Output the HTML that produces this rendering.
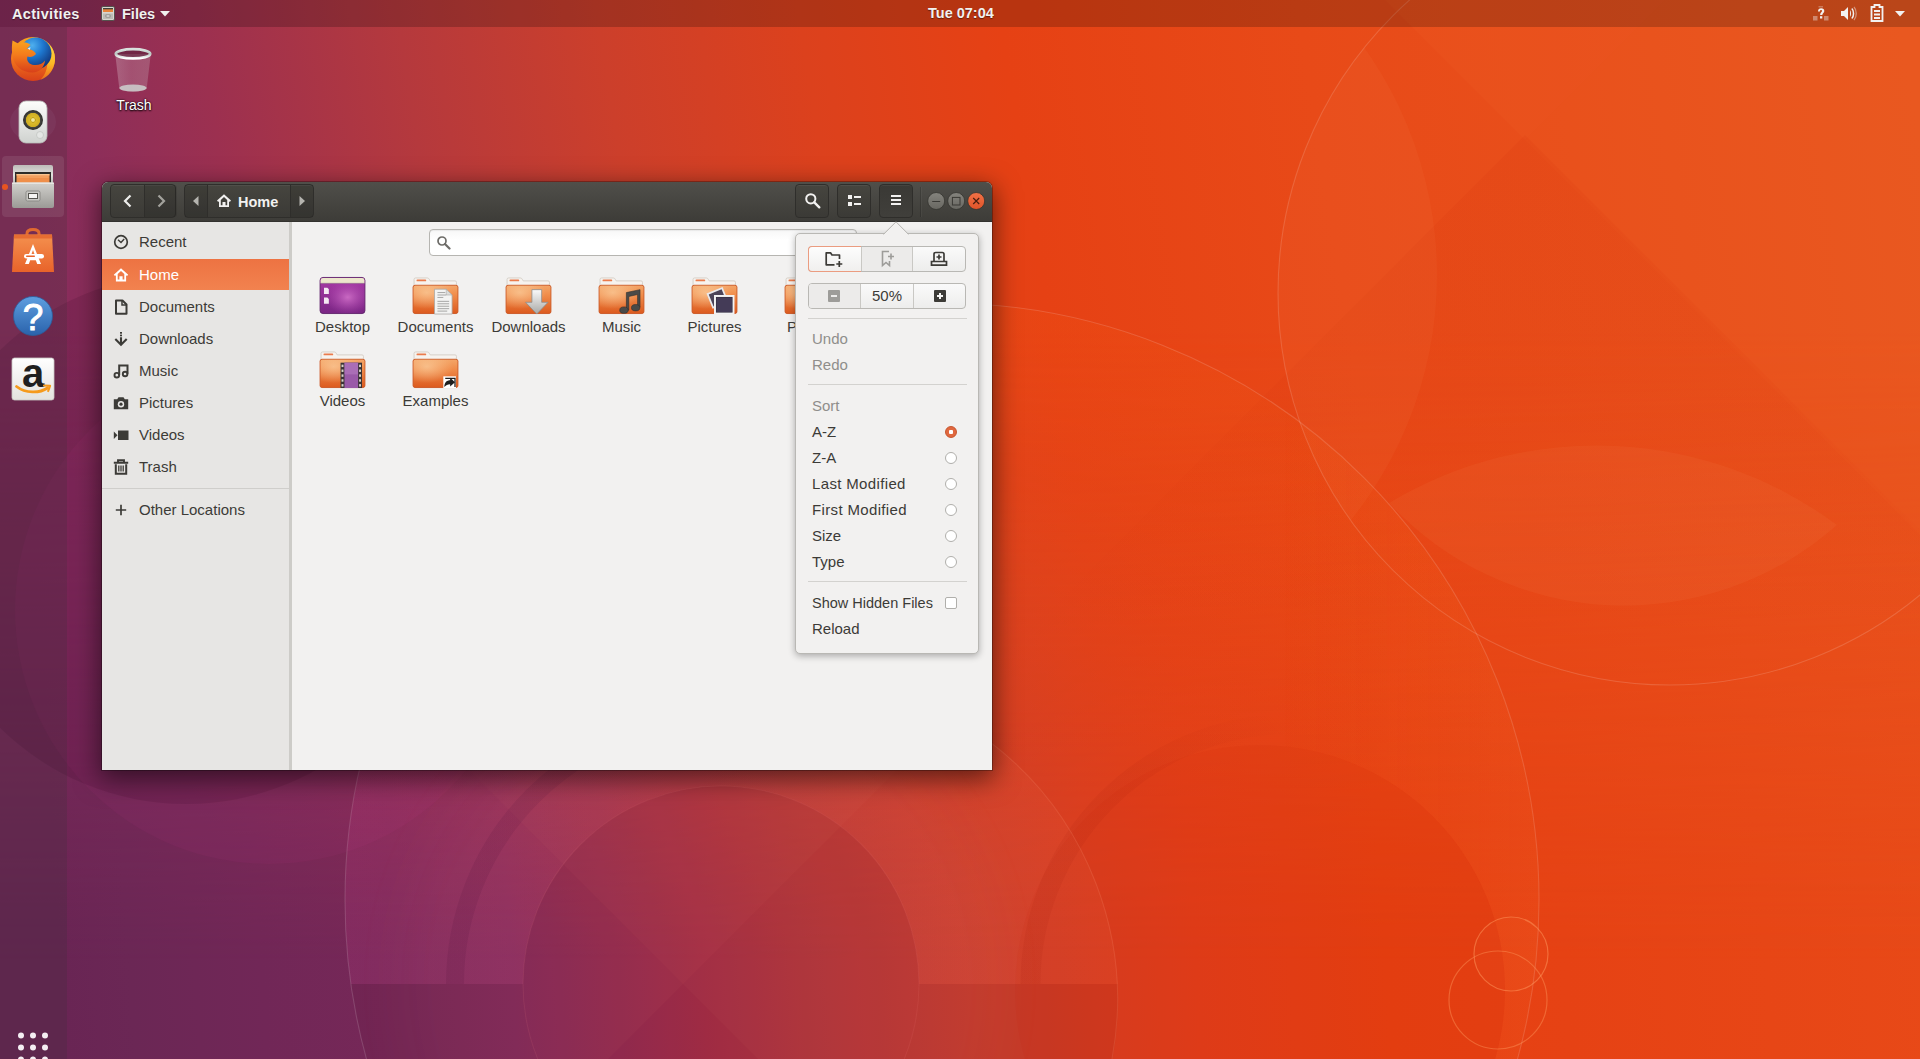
<!DOCTYPE html>
<html lang="en">
<head>
<meta charset="utf-8">
<title>Files - Home</title>
<style>
*{box-sizing:border-box;margin:0;padding:0}
html,body{width:1920px;height:1059px;overflow:hidden;background:#7a2858}
body{position:relative;font-family:"Liberation Sans","DejaVu Sans",sans-serif;font-size:14px;color:#3c3b37}
#wall{position:absolute;left:0;top:0;width:1920px;height:1059px}
/* top bar */
#topbar{position:absolute;left:0;top:0;width:1920px;height:27px;background:rgba(0,0,0,.2);color:#f2f1f0;font-weight:bold;font-size:14.5px}
#topbar .t{position:absolute;top:1px;line-height:27px;letter-spacing:.2px;white-space:nowrap;text-shadow:0 1px 1px rgba(0,0,0,.45)}
/* dock */
#dock{position:absolute;left:0;top:27px;width:67px;height:1032px;background:rgba(52,52,52,.2)}
#dock .hl{position:absolute;left:2px;top:129px;width:62px;height:61px;border-radius:4px;background:rgba(255,255,255,.085)}
#dock .run{position:absolute;left:2px;top:157px;width:6px;height:6px;border-radius:50%;background:#e95420}
#dock svg.ic{position:absolute;left:9px;width:48px;height:48px}
/* desktop icon */
#trash{position:absolute;left:94px;top:44px;width:80px;text-align:center;color:#fff;font-size:14px;text-shadow:0 1px 2px #000,0 0 2px #000}
/* window */
#win{position:absolute;left:102px;top:182px;width:890px;height:588px;border-radius:6px 6px 0 0;box-shadow:0 7px 26px 2px rgba(0,0,0,.55),0 0 0 1px rgba(0,0,0,.28);background:#f2f1f0}
#hdr{position:absolute;left:0;top:0;width:890px;height:40px;border-radius:6px 6px 0 0;background:linear-gradient(#504f4a,#3d3c38);border-bottom:1px solid #33322f}
.hb{position:absolute;top:2px;height:34px;border:1px solid #2f2e2b;border-radius:4px;background:linear-gradient(#46453f,#3b3a36);box-shadow:inset 0 1px 0 rgba(255,255,255,.06)}
#side{position:absolute;left:0;top:40px;width:190px;height:548px;background:#e7e6e4;border-right:3px solid #cdccc8}
#side .row{position:absolute;left:0;width:187px;height:32px;line-height:32px;padding-left:37px;font-size:15px;color:#3c3b37;white-space:nowrap}
#side .row.sel{background:linear-gradient(#ed7342,#f2824f);color:#fff}
#side .row svg{position:absolute;left:11px;top:8px;width:16px;height:16px}
#side .sep{position:absolute;left:0;top:266px;width:187px;height:1px;background:#cfcecb}
#main{position:absolute;left:190px;top:40px;width:700px;height:548px;background:#f2f1f0;overflow:hidden}
#search{position:absolute;left:137px;top:7px;width:428px;height:27px;border:1px solid #b6b5b1;border-radius:4px;background:linear-gradient(#f7f7f7,#fff 40%);box-shadow:inset 0 1px 1px rgba(0,0,0,.06)}
.fi{position:absolute;width:93px;text-align:center;font-size:15px;line-height:17px;color:#3c3b37;white-space:nowrap}
.fi svg{display:block;margin:0 auto 3px;width:47px;height:39px}
/* popover */
#pop{position:absolute;left:795px;top:233px;width:184px;height:421px;background:#f2f1f0;border:1px solid #b9b8b4;border-radius:5px;box-shadow:0 2px 7px rgba(0,0,0,.3);font-size:15px}
#pop .it{position:absolute;left:16px;height:26px;line-height:26px;white-space:nowrap;color:#3c3b37}
#pop .it.dis{color:#8f8e8b}
#pop .sp{position:absolute;left:12px;width:159px;height:1px;background:#d3d2cf}
#pop .rd{position:absolute;left:149px;width:12px;height:12px;border-radius:50%;border:1px solid #b0afab;background:#fff}
#pop .rd.on{border-color:#c8542c;background:radial-gradient(circle,#fff 0 2px,#e0683f 2.5px)}
#pop .cb{position:absolute;left:149px;width:12px;height:12px;border-radius:2px;border:1px solid #b0afab;background:#fff}
.bg{position:absolute;left:12px;width:158px;height:26px;border:1px solid #b9b8b4;border-radius:4px;background:linear-gradient(#fafafa,#ededec)}
.bg .c{position:absolute;top:0;height:24px;width:52px}
</style>
</head>
<body>
<!--WALL-->
<svg id="wall" viewBox="0 0 1920 1059" width="1920" height="1059">
<defs>
<linearGradient id="gt" gradientUnits="userSpaceOnUse" x1="0" y1="30" x2="1874" y2="-270">
<stop offset="0" stop-color="#872c5c"/>
<stop offset="0.036" stop-color="#8c2e5a"/>
<stop offset="0.104" stop-color="#9c3050"/>
<stop offset="0.208" stop-color="#b5393d"/>
<stop offset="0.312" stop-color="#cc3f2b"/>
<stop offset="0.417" stop-color="#dc411d"/>
<stop offset="0.521" stop-color="#e64114"/>
<stop offset="0.677" stop-color="#e84a18"/>
<stop offset="0.99" stop-color="#e9561f"/>
</linearGradient>
<linearGradient id="gb" gradientUnits="userSpaceOnUse" x1="0" y1="0" x2="1920" y2="-120">
<stop offset="0.000" stop-color="#692554"/>
<stop offset="0.036" stop-color="#6b2755"/>
<stop offset="0.104" stop-color="#712757"/>
<stop offset="0.177" stop-color="#772858"/>
<stop offset="0.234" stop-color="#822a5c"/>
<stop offset="0.284" stop-color="#922c52"/>
<stop offset="0.333" stop-color="#a42e46"/>
<stop offset="0.385" stop-color="#b2363c"/>
<stop offset="0.438" stop-color="#c03a34"/>
<stop offset="0.484" stop-color="#cc3e2c"/>
<stop offset="0.536" stop-color="#d83e22"/>
<stop offset="0.589" stop-color="#e03e1a"/>
<stop offset="0.688" stop-color="#e64012"/>
<stop offset="0.781" stop-color="#e64214"/>
<stop offset="0.990" stop-color="#e84a18"/>
</linearGradient>
<linearGradient id="gm" gradientUnits="userSpaceOnUse" x1="0" y1="330" x2="0" y2="960">
<stop offset="0" stop-color="#fff"/><stop offset=".5" stop-color="#808080"/><stop offset="1" stop-color="#000"/>
</linearGradient>
<mask id="mt" maskUnits="userSpaceOnUse" x="0" y="0" width="1920" height="1059"><rect width="1920" height="1059" fill="url(#gm)"/></mask>
<clipPath id="cC1"><circle cx="1670" cy="293" r="392"/></clipPath>
<clipPath id="cBig"><circle cx="942" cy="900" r="597"/></clipPath>
<clipPath id="cDisc"><circle cx="721" cy="984" r="198"/></clipPath>
<clipPath id="cTop"><rect x="0" y="0" width="1920" height="984"/></clipPath>
<linearGradient id="gr1" gradientUnits="userSpaceOnUse" x1="455" y1="984" x2="721" y2="718"><stop offset="0" stop-color="#50103a" stop-opacity=".15"/><stop offset=".6" stop-color="#50103a" stop-opacity=".12"/><stop offset="1" stop-color="#50103a" stop-opacity="0"/></linearGradient>
<linearGradient id="gr2" gradientUnits="userSpaceOnUse" x1="1030" y1="984" x2="1290" y2="724"><stop offset="0" stop-color="#a01808" stop-opacity=".11"/><stop offset=".6" stop-color="#a01808" stop-opacity=".09"/><stop offset="1" stop-color="#a01808" stop-opacity="0"/></linearGradient>
<linearGradient id="glz" gradientUnits="userSpaceOnUse" x1="345" y1="0" x2="1118" y2="0"><stop offset="0" stop-color="#ff50b0" stop-opacity=".1"/><stop offset=".45" stop-color="#ff7080" stop-opacity=".05"/><stop offset="1" stop-color="#ffb090" stop-opacity=".045"/></linearGradient>
<clipPath id="cND"><path clip-rule="evenodd" d="M0 0H1920V1059H0zM919 984A198 198 0 1 0 523 984A198 198 0 1 0 919 984z"/></clipPath>
<linearGradient id="gmz" gradientUnits="userSpaceOnUse" x1="0" y1="690" x2="0" y2="800"><stop offset="0" stop-color="#000"/><stop offset="1" stop-color="#fff"/></linearGradient>
<mask id="mz" maskUnits="userSpaceOnUse" x="0" y="0" width="1920" height="1059"><rect width="1920" height="1059" fill="url(#gmz)"/></mask>
<radialGradient id="gmx" gradientUnits="userSpaceOnUse" cx="700" cy="984" r="340"><stop offset="0" stop-color="#fff"/><stop offset=".78" stop-color="#fff"/><stop offset="1" stop-color="#000"/></radialGradient>
<mask id="mx" maskUnits="userSpaceOnUse" x="0" y="0" width="1920" height="1059"><rect width="1920" height="1059" fill="url(#gmx)"/></mask>
<linearGradient id="gbc" gradientUnits="userSpaceOnUse" x1="0" y1="303" x2="0" y2="800"><stop offset="0" stop-color="#ff6810" stop-opacity=".11"/><stop offset=".4" stop-color="#ff6810" stop-opacity=".09"/><stop offset="1" stop-color="#ff6810" stop-opacity="0"/></linearGradient>
<clipPath id="cZone"><rect x="340" y="0" width="454" height="1059"/><circle cx="794" cy="1000" r="324"/></clipPath>
<mask id="mcr" maskUnits="userSpaceOnUse" x="0" y="0" width="1920" height="1059"><rect width="1920" height="1059" fill="#000"/><circle cx="1275" cy="990" r="236" fill="#fff"/><circle cx="1260" cy="990" r="245" fill="#000"/><rect x="0" y="984" width="1920" height="80" fill="#000"/></mask>
<linearGradient id="gq" gradientUnits="userSpaceOnUse" x1="0" y1="135" x2="0" y2="640"><stop offset="0" stop-color="#c82000" stop-opacity=".09"/><stop offset=".5" stop-color="#c82000" stop-opacity=".06"/><stop offset="1" stop-color="#c82000" stop-opacity="0"/></linearGradient>
<mask id="mcr2" maskUnits="userSpaceOnUse" x="0" y="0" width="1920" height="1059"><rect width="1920" height="1059" fill="#000"/><circle cx="942" cy="900" r="597" fill="#fff"/><circle cx="1260" cy="990" r="245" fill="#000"/></mask>
<linearGradient id="gcr2" gradientUnits="userSpaceOnUse" x1="1280" y1="0" x2="1540" y2="0"><stop offset="0" stop-color="#ff7a30" stop-opacity="0"/><stop offset="1" stop-color="#ff7a30" stop-opacity=".1"/></linearGradient>
</defs>
<rect width="1920" height="1059" fill="url(#gb)"/>
<rect width="1920" height="1059" fill="url(#gt)" mask="url(#mt)"/>
<!-- upper-right X quadrants -->
<path d="M1525 135L1920 530V640H1020z" fill="url(#gq)"/>
<path d="M1525 140L1385 0H1665z" fill="#ff9050" fill-opacity=".05"/>
<path d="M1525 140L1665 0H1920V535z" fill="#ff9050" fill-opacity=".045"/>

<circle cx="942" cy="900" r="597" fill="url(#gbc)"/>
<!-- big thin circle -->
<circle cx="942" cy="900" r="597" fill="none" stroke="#fff" stroke-opacity=".15" stroke-width="1.1"/>
<!-- lens upper right -->
<g clip-path="url(#cC1)"><circle cx="1045" cy="275" r="392" fill="#ffa060" fill-opacity=".07"/></g>
<circle cx="1670" cy="293" r="392" fill="none" stroke="#fff" stroke-opacity=".15" stroke-width="1.1"/>
<!-- leaf -->
<path d="M1389 503A403 403 0 0 1 1837 525A321 321 0 0 1 1389 503z" fill="#ffb070" fill-opacity=".07"/>
<!-- left-bottom lighter circle -->
<circle cx="186" cy="539" r="265" fill="#30001c" fill-opacity=".13"/>
<circle cx="269" cy="610" r="254" fill="#ff50b0" fill-opacity=".045"/>
<!-- horizon zones -->
<g clip-path="url(#cBig)"><g clip-path="url(#cND)"><g clip-path="url(#cZone)"><rect x="340" y="0" width="780" height="984" fill="url(#glz)"/><rect x="340" y="984" width="780" height="80" fill="#300010" fill-opacity=".06"/></g></g></g>
<rect x="1030" y="700" width="300" height="284" fill="#ffb090" fill-opacity=".05" mask="url(#mcr)"/>
<!-- dark disc bottom right -->
<circle cx="1260" cy="990" r="245" fill="#c02000" fill-opacity=".07"/>
<path d="M1030.500 984A260 260 0 0 1 1290 724" fill="none" stroke="url(#gr2)" stroke-width="20"/>
<!-- disc + ring bottom center -->
<circle cx="721" cy="984" r="198" fill="#7a1030" fill-opacity=".10"/>
<g clip-path="url(#cBig)" mask="url(#mx)"><path d="M383 684H1118V1059H758z" fill="#ff9080" fill-opacity=".04"/><path d="M983 684H345V1059H608z" fill="#ff9080" fill-opacity=".04"/></g>
<circle cx="721" cy="984" r="198" fill="none" stroke="#ff9090" stroke-opacity=".1" stroke-width="1.1"/>
<path d="M455 984A266 266 0 0 1 721 718" fill="none" stroke="url(#gr1)" stroke-width="18"/>
<path d="M990 742A324 324 0 0 1 1112 1059" fill="none" stroke="#ffa080" stroke-opacity=".16" stroke-width="1.1"/>
<rect x="1280" y="300" width="270" height="759" fill="url(#gcr2)" mask="url(#mcr2)"/>
<!-- small circles -->
<circle cx="1511" cy="954" r="37" fill="#ff9050" fill-opacity=".05" stroke="#ff9a60" stroke-opacity=".5" stroke-width="1.2"/>
<circle cx="1498" cy="1000" r="49" fill="none" stroke="#ff9a60" stroke-opacity=".42" stroke-width="1.2"/>
</svg>
<!--/WALL-->
<!--TOPBAR-->
<div id="topbar">
<span class="t" style="left:12px;letter-spacing:.32px">Activities</span>
<svg style="position:absolute;left:101px;top:6px" width="14" height="15" viewBox="0 0 14 15"><rect x=".5" y=".5" width="13" height="14" rx="1.5" fill="#d8d6d0" stroke="#55534e"/><rect x="2" y="2" width="10" height="4" fill="#e8843c"/><rect x="2" y="2" width="10" height="1.3" fill="#43423e"/><rect x="2" y="7.5" width="10" height="5.5" fill="#bdbbb5"/><rect x="5" y="9" width="4" height="2" fill="#f4f3f1" stroke="#6b6a66" stroke-width=".6"/></svg>
<span class="t" style="left:122px;letter-spacing:0">Files</span>
<svg style="position:absolute;left:160px;top:11px" width="10" height="6" viewBox="0 0 10 6"><path d="M0 0h10L5 5.5z" fill="#f2f1f0"/></svg>
<span class="t" style="left:928px;top:0;letter-spacing:0">Tue 07:04</span>
<svg style="position:absolute;left:1812px;top:5px" width="18" height="17" viewBox="0 0 18 17"><g fill="#f2f1f0"><rect x="1" y="11" width="4.5" height="4.5" opacity=".4"/><rect x="12" y="11" width="4.5" height="4.5" opacity=".4"/><rect x="6.5" y="1" width="4.500" height="1.500" opacity=".3"/><path d="M6 6.500C6 4.200 7.300 3.200 9.200 3.200c1.900 0 3.100 1 3.100 2.700 0 1.900-2 2.400-2 4.100H8.100c0-2.200 1.900-2.800 1.900-4 0-.6-.4-1-1-1-.7 0-1.100.5-1.100 1.500z"/><rect x="8" y="11.200" width="2.300" height="2.300"/></g></svg>
<svg style="position:absolute;left:1840px;top:5px" width="18" height="17" viewBox="0 0 18 17"><g fill="#f2f1f0"><path d="M1 6h3l4-4v13l-4-4H1z"/><path d="M10 5.200c1.300.8 1.300 5.800 0 6.600V5.200z"/></g><path d="M11.800 3.500c2.300 2 2.300 8 0 10" fill="none" stroke="#f2f1f0" stroke-width="1.500"/><path d="M14 2c3 3 3 10 0 13" fill="none" stroke="#f2f1f0" stroke-width="1.300" opacity=".45"/></svg>
<svg style="position:absolute;left:1870px;top:4px" width="14" height="18" viewBox="0 0 14 18"><path d="M4.500 1h5v2H12.500v14h-11V3H4.500z" fill="none" stroke="#f2f1f0" stroke-width="1.800"/><g fill="#f2f1f0"><rect x="4" y="6" width="6" height="2"/><rect x="4" y="9.500" width="6" height="2"/><rect x="4" y="13" width="6" height="2"/></g></svg>
<svg style="position:absolute;left:1895px;top:11px" width="10" height="6" viewBox="0 0 10 6"><path d="M0 0h10L5 5.500z" fill="#f2f1f0"/></svg>
</div>
<!--/TOPBAR-->
<!--DOCK-->
<div id="dock">
<div class="hl"></div><div class="run"></div>
<!-- firefox -->
<svg class="ic" style="top:7px" viewBox="0 0 48 48"><defs><radialGradient id="ffb" cx=".4" cy=".25" r=".75"><stop offset="0" stop-color="#4fb0ee"/><stop offset=".45" stop-color="#1e78d0"/><stop offset="1" stop-color="#12357a"/></radialGradient><linearGradient id="ffo" x1="0" y1="0" x2="0" y2="1"><stop offset="0" stop-color="#f9a31e"/><stop offset=".45" stop-color="#f47b1c"/><stop offset="1" stop-color="#d8401a"/></linearGradient><linearGradient id="ffy" x1="0" y1="0" x2="0" y2="1"><stop offset="0" stop-color="#fde04a"/><stop offset=".6" stop-color="#fbb826"/><stop offset="1" stop-color="#f58a1c" stop-opacity=".6"/></linearGradient></defs><circle cx="24" cy="25" r="22" fill="url(#ffo)"/><path d="M34 5.400A22 22 0 0 1 31.500 45.700C36.500 41 38.500 34 38.500 27 38.500 19 37 11 34 5.400z" fill="url(#ffy)"/><circle cx="26.500" cy="19.500" r="16" fill="url(#ffb)"/><path d="M3.500 6.500L9.500 9.800C13 7.500 18.500 7.800 21.500 11L18 14.500C21.500 15.500 25.500 16.500 27 20 24.500 23 21 23.500 18.500 22.500 17 26.500 20 30.500 25 31 29.500 31.500 33.500 30 36 26.500 35.500 33 30.500 38.500 23.500 38.500 13 38.500 5 32 3.500 22 2.500 16 3 10 3.500 6.500z" fill="url(#ffo)"/><path d="M18.500 14.200L21.500 13.200 20.800 16z" fill="#fff" opacity=".85"/></svg>
<!-- rhythmbox -->
<svg class="ic" style="top:71px" viewBox="0 0 48 48"><defs><linearGradient id="rbb" x1="0" y1="0" x2="0" y2="1"><stop offset="0" stop-color="#fdfdfc"/><stop offset="1" stop-color="#cfd2cf"/></linearGradient><radialGradient id="rby"><stop offset="0" stop-color="#f6f0c0"/><stop offset=".18" stop-color="#e6d66a"/><stop offset=".24" stop-color="#b8981c"/><stop offset=".3" stop-color="#dcbc2c"/><stop offset=".68" stop-color="#cfae22"/><stop offset=".75" stop-color="#44443e"/><stop offset="1" stop-color="#2c2c2a"/></radialGradient></defs><ellipse cx="24" cy="24" rx="23" ry="19" fill="#cfd8ff" opacity=".05"/><rect x="10" y="3" width="28" height="42" rx="7" fill="url(#rbb)" stroke="#b9bcb9" stroke-width=".8"/><circle cx="24" cy="22" r="10" fill="url(#rby)"/><circle cx="31" cy="37" r="3.500" fill="#e4e6e4" stroke="#bfc2bf" stroke-width=".7"/></svg>
<!-- files -->
<svg class="ic" style="top:135px" viewBox="0 0 48 48"><defs><linearGradient id="fcb" x1="0" y1="0" x2="0" y2="1"><stop offset="0" stop-color="#d2d1cd"/><stop offset="1" stop-color="#9b9a96"/></linearGradient><linearGradient id="fct" x1="0" y1="0" x2="0" y2="1"><stop offset="0" stop-color="#bdbcb8"/><stop offset=".5" stop-color="#e2e1de"/><stop offset="1" stop-color="#b0afab"/></linearGradient></defs><rect x="4" y="3" width="40" height="20" rx="2" fill="url(#fct)"/><rect x="6" y="10" width="36" height="11" fill="#2e2c28"/><rect x="7.500" y="12" width="33" height="9" fill="#ef8f4a"/><rect x="7.500" y="12" width="33" height="1.500" fill="#f9c48f"/><rect x="8.500" y="14.500" width="31" height="1" fill="#f7b070"/><rect x="3" y="20.500" width="42" height="25.500" rx="2" fill="url(#fcb)"/><rect x="3" y="20.500" width="42" height="1.500" fill="#e6e5e2"/><rect x="17" y="29" width="14" height="10" rx="1.500" fill="#c9c8c4" stroke="#8b8a86" stroke-width="1"/><rect x="19.500" y="31.500" width="9" height="5" fill="#f6f5f3" stroke="#55544f" stroke-width="1"/></svg>
<!-- software -->
<svg class="ic" style="top:199px" viewBox="0 0 48 48"><defs><linearGradient id="swb" x1="0" y1="0" x2="0" y2="1"><stop offset="0" stop-color="#f4914f"/><stop offset="1" stop-color="#e8632a"/></linearGradient></defs><path d="M18 14V7.500c0-3 2.500-4 6-4s6 1 6 4V14" fill="none" stroke="#e06a30" stroke-width="3"/><path d="M5 8.500h38l2 37.500H3z" fill="url(#swb)"/><path d="M5 8.500h38l.3 4H4.700z" fill="#e2642c" opacity=".8"/><path d="M24 18l8 20h-3.800l-1.400-3.800h-5.600L19.800 38H16zM24 24l-1.800 5h3.600z" fill="#fff"/><rect x="15" y="28" width="20" height="4.500" rx="2.200" fill="#fff"/><rect x="17" y="29.500" width="9" height="1.500" rx=".7" fill="#e8632a"/></svg>
<!-- help -->
<svg class="ic" style="top:265px" viewBox="0 0 48 48"><defs><linearGradient id="hpb" x1="0" y1="0" x2="0" y2="1"><stop offset="0" stop-color="#5d9fe0"/><stop offset="1" stop-color="#2a62ab"/></linearGradient></defs><circle cx="24" cy="24" r="19.500" fill="url(#hpb)" stroke="#2b5c9b" stroke-width=".8"/><text x="24" y="37.500" text-anchor="middle" font-family="Liberation Sans,sans-serif" font-size="37" fill="#fff" stroke="#fff" stroke-width=".9">?</text></svg>
<!-- amazon -->
<svg class="ic" style="top:328px" viewBox="0 0 48 48"><defs><linearGradient id="amb" x1="0" y1="0" x2="0" y2="1"><stop offset="0" stop-color="#ffffff"/><stop offset="1" stop-color="#e3e2de"/></linearGradient></defs><rect x="3" y="3" width="42" height="42" rx="2.500" fill="url(#amb)" stroke="#c9c8c4" stroke-width=".8"/><text x="24" y="31.500" text-anchor="middle" font-family="Liberation Sans,sans-serif" font-weight="bold" font-size="40" fill="#1f1f1f">a</text><path d="M7.500 31.500c9 7 23 7 31 1.500" fill="none" stroke="#f59a1c" stroke-width="2.800" stroke-linecap="round"/><path d="M35 30.500l6 .3-1.800 5.200" fill="none" stroke="#f59a1c" stroke-width="2.200" stroke-linecap="round" stroke-linejoin="round"/></svg>
<!-- apps grid -->
<svg style="position:absolute;left:17px;top:1004px" width="32" height="28" viewBox="0 0 32 28"><g fill="#f4eef2"><circle cx="4" cy="4.500" r="3"/><circle cx="16" cy="4.500" r="3"/><circle cx="28" cy="4.500" r="3"/><circle cx="4" cy="16.500" r="3"/><circle cx="16" cy="16.500" r="3"/><circle cx="28" cy="16.500" r="3"/><circle cx="4" cy="28.500" r="3"/><circle cx="16" cy="28.500" r="3"/><circle cx="28" cy="28.500" r="3"/></g></svg>
</div>
<!--/DOCK-->
<!--TRASH-->
<div id="trash">
<svg width="40" height="46" viewBox="0 0 40 46" style="display:block;margin:3px auto 4px;position:relative;left:-1.5px"><defs><linearGradient id="trb" x1="0" y1="0" x2="1" y2="0"><stop offset="0" stop-color="#e4d9de" stop-opacity=".30"/><stop offset=".45" stop-color="#e4d9de" stop-opacity=".2"/><stop offset="1" stop-color="#c9bcc4" stop-opacity=".28"/></linearGradient><linearGradient id="trr" x1="0" y1="0" x2="0" y2="1"><stop offset="0" stop-color="#d9e2de"/><stop offset=".5" stop-color="#b9c6c1"/><stop offset="1" stop-color="#ffffff"/></linearGradient></defs><path d="M2.200 7l4 33.500c0 2.400 6.200 4.300 13.800 4.300s13.800-1.900 13.800-4.300l4-33.500z" fill="url(#trb)"/><ellipse cx="20" cy="41" rx="13.600" ry="3.500" fill="#cfdad5" opacity=".8"/><ellipse cx="20" cy="6.800" rx="17.200" ry="4.600" fill="#4a1e34" fill-opacity=".45" stroke="url(#trr)" stroke-width="2.800"/></svg>
Trash</div>
<!--/TRASH-->
<!--WIN-->
<div id="win">
<div id="hdr">
<!-- back / forward -->
<div class="hb" style="left:8px;width:66px"><div style="position:absolute;left:33px;top:0;width:1px;height:32px;background:#2f2e2b"></div><div style="position:absolute;left:34px;top:0;width:32px;height:32px;background:rgba(0,0,0,.10);border-radius:0 3px 3px 0"></div>
<svg style="position:absolute;left:11px;top:9px" width="12" height="14" viewBox="0 0 12 14"><path d="M8.500 1.500L3 7l5.500 5.500" fill="none" stroke="#eeeeec" stroke-width="2.200"/></svg>
<svg style="position:absolute;left:44px;top:9px" width="12" height="14" viewBox="0 0 12 14"><path d="M3.500 1.500L9 7l-5.500 5.500" fill="none" stroke="#a3a29d" stroke-width="2.200"/></svg></div>
<!-- path bar -->
<div class="hb" style="left:82px;width:130px"><div style="position:absolute;left:22px;top:0;width:1px;height:32px;background:#2f2e2b"></div><div style="position:absolute;left:105px;top:0;width:1px;height:32px;background:#2f2e2b"></div><div style="position:absolute;left:0;top:0;width:22px;height:32px;background:rgba(0,0,0,.10)"></div><div style="position:absolute;left:106px;top:0;width:22px;height:32px;background:rgba(0,0,0,.10)"></div>
<svg style="position:absolute;left:8px;top:11px" width="6" height="10" viewBox="0 0 6 10"><path d="M5.500 0v10L0 5z" fill="#b5b4af"/></svg>
<svg style="position:absolute;left:31px;top:8px" width="16" height="15" viewBox="0 0 16 15"><path d="M8 1.200L1 7.600l1.200 1.300L3 8.200V14h10V8.200l.8.700L15 7.600zM8 4l3.200 2.900V12.200H9.500V9h-3v3.200H4.800V6.900z" fill="#f2f1f0"/></svg>
<span style="position:absolute;left:53px;top:0;line-height:34px;font-weight:bold;font-size:14.500px;color:#f2f1f0">Home</span>
<svg style="position:absolute;left:114px;top:11px" width="6" height="10" viewBox="0 0 6 10"><path d="M.5 0v10L6 5z" fill="#b5b4af"/></svg></div>
<!-- search -->
<div class="hb" style="left:693px;width:34px"><svg style="position:absolute;left:8px;top:7px" width="17" height="17" viewBox="0 0 17 17"><circle cx="6.800" cy="6.800" r="4.600" fill="none" stroke="#f2f1f0" stroke-width="2"/><path d="M10.300 10.300l5 5" stroke="#f2f1f0" stroke-width="2.400" stroke-linecap="round"/></svg></div>
<!-- view toggle -->
<div class="hb" style="left:735px;width:34px"><svg style="position:absolute;left:10px;top:10px" width="13" height="12" viewBox="0 0 13 12"><g fill="#f2f1f0"><rect x="0" y="0" width="4" height="4"/><rect x="6" y="1" width="7" height="2"/><rect x="0" y="7" width="4" height="4"/><rect x="6" y="8" width="7" height="2"/></g></svg></div>
<!-- menu -->
<div class="hb" style="left:777px;width:34px;background:linear-gradient(#3a3935,#403f3b)"><svg style="position:absolute;left:11px;top:10px" width="10" height="11" viewBox="0 0 10 11"><g fill="#f2f1f0"><rect y="0" width="10" height="2"/><rect y="4" width="10" height="2"/><rect y="8" width="10" height="2"/></g></svg></div>
<div style="position:absolute;left:818px;top:5px;width:1px;height:30px;background:rgba(0,0,0,.16);box-shadow:1px 0 0 rgba(255,255,255,.04)"></div>
<!-- window controls -->
<svg style="position:absolute;left:824px;top:9px" width="62" height="20" viewBox="0 0 62 20"><defs><linearGradient id="wcg" x1="0" y1="0" x2="0" y2="1"><stop offset="0" stop-color="#85847e"/><stop offset="1" stop-color="#686761"/></linearGradient><linearGradient id="wcc" x1="0" y1="0" x2="0" y2="1"><stop offset="0" stop-color="#f17247"/><stop offset="1" stop-color="#e05328"/></linearGradient></defs><circle cx="10.200" cy="10" r="8.500" fill="url(#wcg)" stroke="#34332f" stroke-width=".8"/><path d="M6.200 10.500h8" stroke="#3a3935" stroke-width="1"/><circle cx="30.200" cy="10" r="8.500" fill="url(#wcg)" stroke="#34332f" stroke-width=".8"/><rect x="26.400" y="6.400" width="7.600" height="7.600" fill="none" stroke="#3a3935" stroke-width="1"/><circle cx="50.200" cy="10" r="8.500" fill="url(#wcc)" stroke="#34332f" stroke-width=".8"/><path d="M47.200 7l6 6M53.200 7l-6 6" stroke="#4a1e10" stroke-width="1.200"/></svg>
</div>
<div id="side">
<div class="row" style="top:4px"><svg viewBox="0 0 16 16"><circle cx="8" cy="8" r="6.300" fill="none" stroke="#3c3b37" stroke-width="1.700"/><path d="M5 5.800L8 8.500L11.200 5" fill="none" stroke="#3c3b37" stroke-width="1.400"/></svg>Recent</div>
<div class="row sel" style="top:37px;height:31px;line-height:32px"><svg viewBox="0 0 16 16" style="top:8px"><path d="M8 1.200L.8 7.800 2 9.100l.9-.8V14.500h10.200V8.300l.9.800 1.200-1.300zM8 4l3.300 3v5.600H9.600V9.200H6.400v3.400H4.700V7z" fill="#fff"/></svg>Home</div>
<div class="row" style="top:69px"><svg viewBox="0 0 16 16"><path d="M3 1.500h6.500L13.500 5.500v9.300H3z" fill="none" stroke="#3c3b37" stroke-width="2" stroke-linejoin="round"/><path d="M9 1.500V6h4.500" fill="none" stroke="#3c3b37" stroke-width="1.500"/></svg>Documents</div>
<div class="row" style="top:101px"><svg viewBox="0 0 16 16"><path d="M8 6.200v6.500M2.300 8L8 13.700 13.700 8" fill="none" stroke="#3c3b37" stroke-width="2.100"/><rect x="7" y="1" width="2" height="1.700" fill="#3c3b37"/><rect x="7" y="3.600" width="2" height="1.700" fill="#3c3b37"/></svg>Downloads</div>
<div class="row" style="top:133px"><svg viewBox="0 0 16 16"><path d="M6.200 12V2.500h8.300v8.300" fill="none" stroke="#3c3b37" stroke-width="2"/><circle cx="3.800" cy="12.200" r="2.300" fill="none" stroke="#3c3b37" stroke-width="1.900"/><circle cx="12.100" cy="11" r="2.300" fill="none" stroke="#3c3b37" stroke-width="1.900"/></svg>Music</div>
<div class="row" style="top:165px"><svg viewBox="0 0 16 16"><path d="M.8 4.300h3.400L5.500 2.200h5l1.300 2.100h3.400V14.300H.8z" fill="#3c3b37"/><circle cx="8" cy="9.200" r="3.200" fill="#e7e6e4"/><circle cx="8" cy="9.200" r="1.600" fill="#3c3b37"/></svg>Pictures</div>
<div class="row" style="top:197px"><svg viewBox="0 0 16 16"><rect x="5" y="3.500" width="10.500" height="9.500" fill="#3c3b37"/><path d="M.8 4.500v7.500L4.500 8.200z" fill="#3c3b37"/></svg>Videos</div>
<div class="row" style="top:229px"><svg viewBox="0 0 16 16"><path d="M2.800 5.200V14.800h10.400V5.200" fill="none" stroke="#3c3b37" stroke-width="2"/><path d="M.8 3.700h14.400M5 3.200V1.300h6v1.900" fill="none" stroke="#3c3b37" stroke-width="1.900"/><path d="M5.800 6.500v6M8 6.500v6M10.200 6.500v6" stroke="#3c3b37" stroke-width="1.300"/></svg>Trash</div>
<div class="sep"></div>
<div class="row" style="top:272px"><svg viewBox="0 0 16 16"><path d="M8 2.800v10.400M2.800 8h10.400" stroke="#3c3b37" stroke-width="1.700"/></svg>Other Locations</div>
</div>
<div id="main">
<div id="search"><svg style="position:absolute;left:6px;top:5px" width="15" height="15" viewBox="0 0 15 15"><circle cx="6" cy="6" r="4" fill="none" stroke="#6d6c68" stroke-width="1.700"/><path d="M9 9l4.500 4.500" stroke="#6d6c68" stroke-width="2.200" stroke-linecap="round"/></svg></div>
<!--FILES-->
<svg width="0" height="0" style="position:absolute"><defs>
<linearGradient id="fdb" x1="0" y1="0" x2="0" y2="1"><stop offset="0" stop-color="#f4a668"/><stop offset=".35" stop-color="#f08c4a"/><stop offset="1" stop-color="#dc5a1e"/></linearGradient>
<radialGradient id="fdh" cx=".3" cy=".25" r=".6"><stop offset="0" stop-color="#fbd0a0" stop-opacity=".7"/><stop offset="1" stop-color="#fbd0a0" stop-opacity="0"/></radialGradient>
<linearGradient id="dkb" x1="0" y1="0" x2="0" y2="1"><stop offset="0" stop-color="#a93aa6"/><stop offset="1" stop-color="#7a2684"/></linearGradient>
<radialGradient id="dkh" cx=".62" cy=".55" r=".5"><stop offset="0" stop-color="#d070c8" stop-opacity=".9"/><stop offset="1" stop-color="#b04ab0" stop-opacity="0"/></radialGradient>
<linearGradient id="arw" x1="0" y1="0" x2="0" y2="1"><stop offset="0" stop-color="#fafafa"/><stop offset="1" stop-color="#a8a8a6"/></linearGradient>
<symbol id="folder" viewBox="0 0 48 40"><path d="M2 9V3.500Q2 2 3.500 2H15.500Q17 2 17.500 3.200L18.500 5H44Q45.500 5 45.500 6.500V12H2z" fill="#f6f3ef" stroke="#cfc8bf" stroke-width=".8"/><rect x="4.500" y="3.600" width="10" height="1.800" rx=".9" fill="#ea7b4c"/><rect x="1" y="9.500" width="46" height="29" rx="2" fill="url(#fdb)" stroke="#c9541f" stroke-width=".9"/><rect x="1.500" y="10" width="45" height="28" rx="2" fill="url(#fdh)"/></symbol>
</defs></svg>
<div class="fi" style="left:4px;top:54px"><svg viewBox="0 0 48 40"><rect x="1" y="1.500" width="46" height="37" rx="3" fill="url(#dkb)" stroke="#5e1f68" stroke-width=".9"/><rect x="1.500" y="2" width="45" height="36" rx="3" fill="url(#dkh)"/><path d="M1.500 7.500V4.500Q1.500 2 4 2H44Q46.500 2 46.500 4.500V7.500z" fill="#ece7cc"/><rect x="1.500" y="7" width="45" height="1" fill="#8a7a84" opacity=".5"/><path d="M5 12h3.500l1.500 1.500V18.500H5z" fill="#f4e8f2"/><path d="M5 22h3.500l1.500 1.500V28.500H5z" fill="#f4e8f2"/></svg>Desktop</div>
<div class="fi" style="left:97px;top:54px"><svg viewBox="0 0 48 40"><use href="#folder"/><path d="M23 13.500h12l6 6V39H23z" fill="#f3f3f2" stroke="#a9a9a6" stroke-width=".8"/><path d="M35 13.500v6h6z" fill="#dcdcda" stroke="#a9a9a6" stroke-width=".6"/><g stroke="#9c9c9a" stroke-width=".9"><path d="M26 17h8M26 19.500h9M26 22h6M26 26h12M26 28.500h12M26 31h12M26 33.500h12M26 36h10"/></g></svg>Documents</div>
<div class="fi" style="left:190px;top:54px"><svg viewBox="0 0 48 40"><use href="#folder"/><path d="M27.500 14h10v13h6.500L32.500 39 21 27h6.500z" fill="url(#arw)" stroke="#8d8d8b" stroke-width=".8"/></svg>Downloads</div>
<div class="fi" style="left:283px;top:54px"><svg viewBox="0 0 48 40"><use href="#folder"/><g fill="#4a4a48" stroke="#2e2e2c" stroke-width=".6"><path d="M29 17l14-3v18h-2.500V19l-9 2v14H29z"/><ellipse cx="26.500" cy="35" rx="4.300" ry="3.300"/><ellipse cx="38.500" cy="32.500" rx="4.300" ry="3.300"/></g></svg>Music</div>
<div class="fi" style="left:376px;top:54px"><svg viewBox="0 0 48 40"><use href="#folder"/><g transform="rotate(-22 27 22)"><rect x="19" y="15" width="16" height="15" fill="#4b4358" stroke="#e9e9ec" stroke-width="1.800"/></g><rect x="24.500" y="20.500" width="19" height="18" fill="#2f2a3a" stroke="#f2f2f4" stroke-width="2"/><rect x="26" y="22" width="16" height="15" fill="#54486a" opacity=".6"/></svg>Pictures</div>
<div class="fi" style="left:469px;top:54px"><svg viewBox="0 0 48 40"><use href="#folder"/></svg>Public</div>
<div class="fi" style="left:4px;top:128px"><svg viewBox="0 0 48 40"><use href="#folder"/><rect x="22" y="13" width="22" height="26" fill="#3a3436"/><rect x="26" y="13" width="14" height="26" fill="#9a5aa8"/><rect x="26" y="13" width="14" height="12" fill="#b57cc0" opacity=".6"/><g fill="#d9d4c8"><rect x="23" y="15" width="2" height="2.500"/><rect x="23" y="20" width="2" height="2.500"/><rect x="23" y="25" width="2" height="2.500"/><rect x="23" y="30" width="2" height="2.500"/><rect x="23" y="35" width="2" height="2.500"/><rect x="41" y="15" width="2" height="2.500"/><rect x="41" y="20" width="2" height="2.500"/><rect x="41" y="25" width="2" height="2.500"/><rect x="41" y="30" width="2" height="2.500"/><rect x="41" y="35" width="2" height="2.500"/></g></svg>Videos</div>
<div class="fi" style="left:97px;top:128px"><svg viewBox="0 0 48 40"><use href="#folder"/><rect x="32" y="27" width="13" height="12" fill="#fff"/><path d="M33 38c0-5 3-7 6-7v-2.500l5 4.500-5 4.500V35c-2.500 0-4.500 1-6 3z" fill="#1e1e1e"/><path d="M34 29h10v9" fill="none" stroke="#1e1e1e" stroke-width="1.300"/></svg>Examples</div>
<!--/FILES-->
</div>
</div>
<!--/WIN-->
<!--POP-->
<svg style="position:absolute;left:883px;top:221px;z-index:3" width="26" height="14" viewBox="0 0 26 14"><path d="M1 13L13 1 25 13v1H1z" fill="#f2f1f0"/><path d="M.3 13.500L13 .8 25.700 13.500" fill="none" stroke="#b3b2ae" stroke-width="1"/></svg>
<div id="pop">
<div class="bg" style="top:12px"><div class="c" style="left:-1px;top:-1px;width:53px;height:26px;border:1px solid #eb9c80;border-right:0;border-radius:4px 0 0 4px;background:linear-gradient(#fdfdfd,#f0efee)"></div><div class="c" style="left:52px;background:#ecebea;border-left:1px solid #c9c8c4;border-right:1px solid #c9c8c4"></div>
<svg style="position:absolute;left:16px;top:4px" width="18" height="16" viewBox="0 0 18 16"><path d="M14.500 8V4H7L5.500 1.800H1.200V13.800H9.500" fill="none" stroke="#3c3b37" stroke-width="1.700" stroke-linejoin="round"/><path d="M14.300 10v6M11.300 13h6" stroke="#3c3b37" stroke-width="1.700"/></svg>
<svg style="position:absolute;left:71px;top:3px" width="16" height="18" viewBox="0 0 16 18"><path d="M9 1.500H2.500V15.500L6 12.500 9.500 15.500V11" fill="none" stroke="#9d9c99" stroke-width="1.600"/><path d="M11 3.500v6M8 6.500h6" stroke="#9d9c99" stroke-width="1.600"/></svg>
<svg style="position:absolute;left:121px;top:4px" width="18" height="16" viewBox="0 0 18 16"><path d="M4 10V3.200Q4 1.500 5.700 1.500H12.300Q14 1.500 14 3.200V10" fill="none" stroke="#3c3b37" stroke-width="1.700"/><path d="M1.500 10.500h15v3.700h-15z" fill="none" stroke="#3c3b37" stroke-width="1.700"/><path d="M9 3.500v5M6.500 6h5" stroke="#3c3b37" stroke-width="1.700"/></svg></div>
<div class="bg" style="top:49px"><div class="c" style="left:0;background:#ecebea;border-right:1px solid #c9c8c4;border-radius:3px 0 0 3px"></div><div class="c" style="left:104px;border-left:1px solid #c9c8c4"></div>
<svg style="position:absolute;left:19px;top:6px" width="12" height="12" viewBox="0 0 12 12"><rect width="12" height="12" rx="1" fill="#9d9c99"/><rect x="3" y="5" width="6" height="2" fill="#ecebea"/></svg>
<span style="position:absolute;left:52px;width:52px;text-align:center;top:0;line-height:24px;color:#3c3b37">50%</span>
<svg style="position:absolute;left:125px;top:6px" width="12" height="12" viewBox="0 0 12 12"><rect width="12" height="12" rx="1" fill="#3c3b37"/><path d="M3 6h6M6 3v6" stroke="#f7f7f6" stroke-width="2"/></svg></div>
<div class="sp" style="top:84px"></div>
<span class="it dis" style="top:92px">Undo</span>
<span class="it dis" style="top:118px">Redo</span>
<div class="sp" style="top:150px"></div>
<span class="it dis" style="top:159px">Sort</span>
<span class="it" style="top:185px">A-Z</span><div class="rd on" style="top:192px"></div>
<span class="it" style="top:211px">Z-A</span><div class="rd" style="top:218px"></div>
<span class="it" style="top:237px;letter-spacing:.35px">Last Modified</span><div class="rd" style="top:244px"></div>
<span class="it" style="top:263px;letter-spacing:.35px">First Modified</span><div class="rd" style="top:270px"></div>
<span class="it" style="top:289px">Size</span><div class="rd" style="top:296px"></div>
<span class="it" style="top:315px">Type</span><div class="rd" style="top:322px"></div>
<div class="sp" style="top:347px"></div>
<span class="it" style="top:356px;font-size:14.5px">Show Hidden Files</span><div class="cb" style="top:363px"></div>
<span class="it" style="top:382px">Reload</span>
</div>
<!--/POP-->
</body>
</html>
